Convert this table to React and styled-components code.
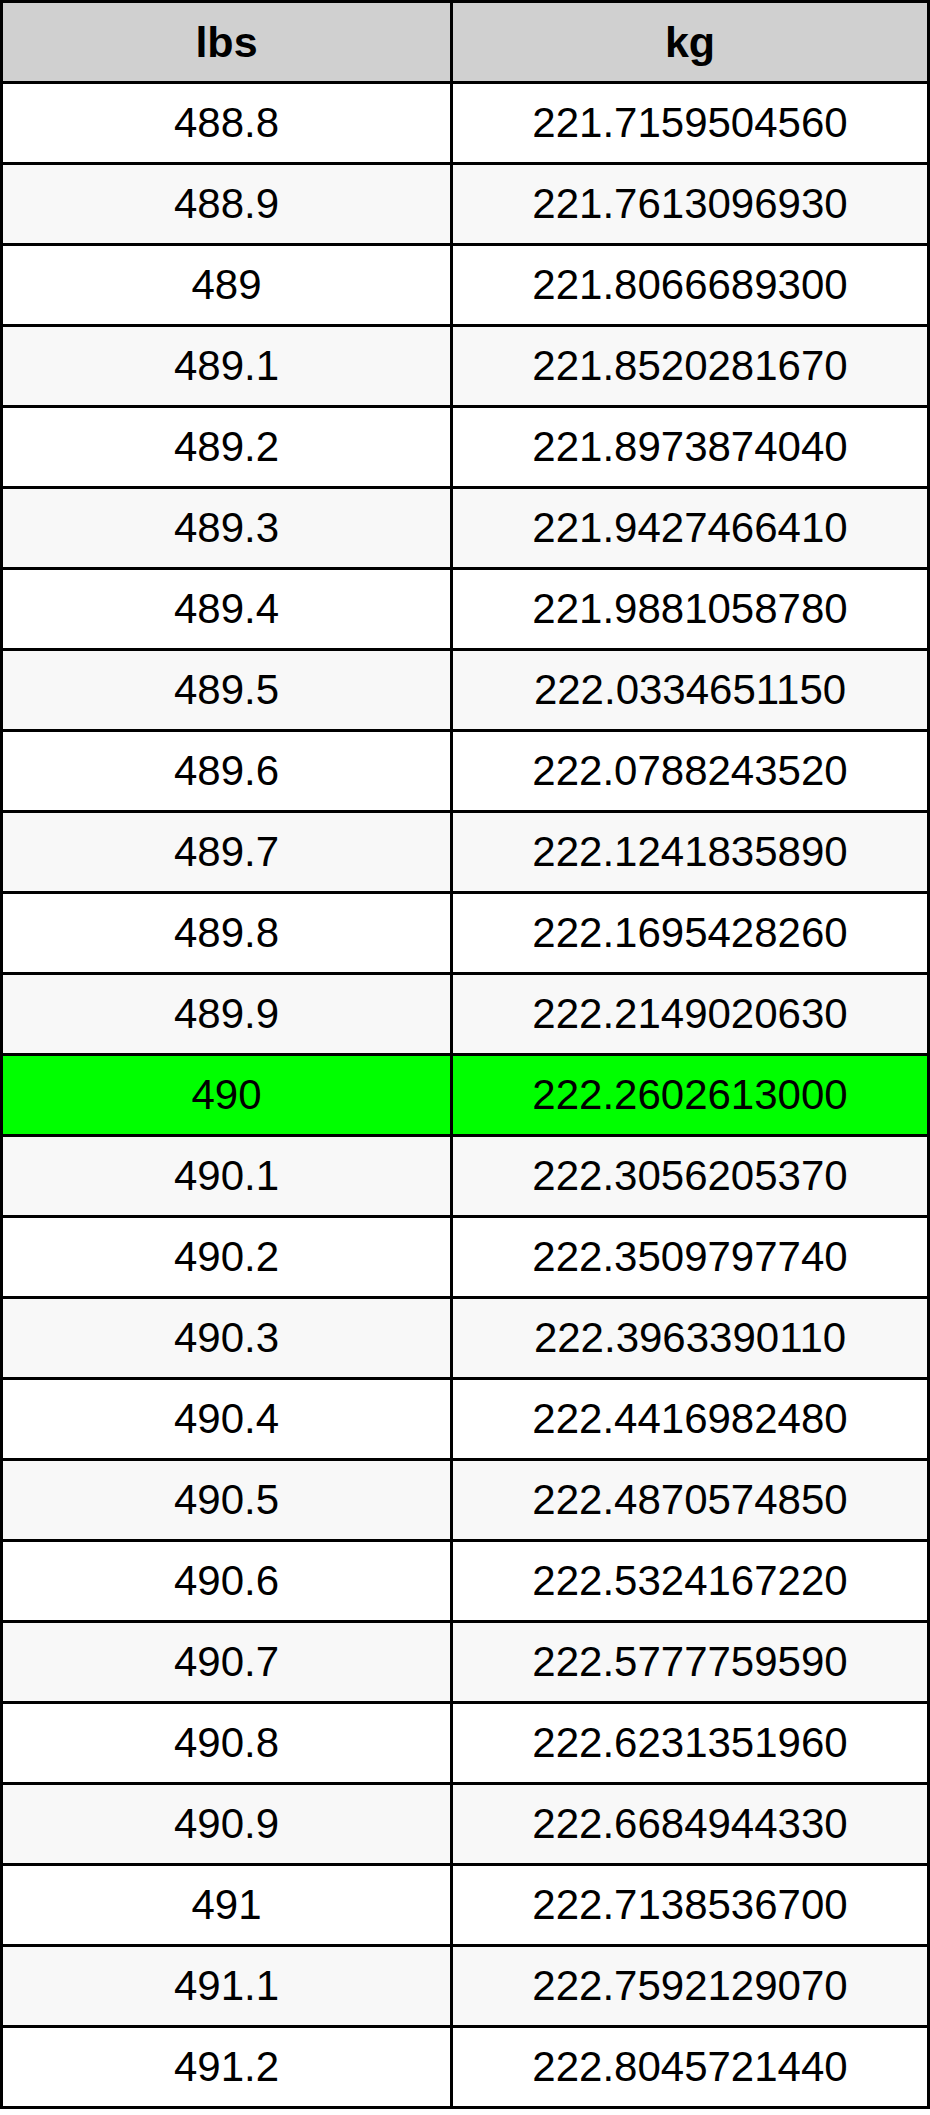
import React from "react";
import styled, { createGlobalStyle } from "styled-components";

const GlobalStyle = createGlobalStyle`
  body {
    margin: 0;
    background: #ffffff;
    font-family: "Liberation Sans", Arial, Helvetica, sans-serif;
  }
`;

const Table = styled.table`
  border-collapse: collapse;
  width: 930px;
  table-layout: fixed;
`;

const HeadCell = styled.th`
  height: 78px;
  padding: 0;
  border: 3px solid #000;
  background-color: #d0d0d0;
  font-size: 43px;
  font-weight: bold;
  text-align: center;
  color: #000;
`;

const Row = styled.tr`
  background-color: ${(p) => (p.$active ? "#00ff00" : p.$odd ? "#f8f8f8" : "#ffffff")};
`;

const Cell = styled.td`
  height: 78px;
  padding: 0;
  border: 3px solid #000;
  font-size: 42px;
  text-align: center;
  color: #000;
`;

const rows = [
  ["488.8", "221.7159504560"],
  ["488.9", "221.7613096930"],
  ["489", "221.8066689300"],
  ["489.1", "221.8520281670"],
  ["489.2", "221.8973874040"],
  ["489.3", "221.9427466410"],
  ["489.4", "221.9881058780"],
  ["489.5", "222.0334651150"],
  ["489.6", "222.0788243520"],
  ["489.7", "222.1241835890"],
  ["489.8", "222.1695428260"],
  ["489.9", "222.2149020630"],
  ["490", "222.2602613000"],
  ["490.1", "222.3056205370"],
  ["490.2", "222.3509797740"],
  ["490.3", "222.3963390110"],
  ["490.4", "222.4416982480"],
  ["490.5", "222.4870574850"],
  ["490.6", "222.5324167220"],
  ["490.7", "222.5777759590"],
  ["490.8", "222.6231351960"],
  ["490.9", "222.6684944330"],
  ["491", "222.7138536700"],
  ["491.1", "222.7592129070"],
  ["491.2", "222.8045721440"],
];

const App = () => {
  return (
    <>
      <GlobalStyle />
      <Table>
        <colgroup>
          <col style={{ width: "450px" }} />
          <col />
        </colgroup>
        <thead>
          <tr>
            <HeadCell>lbs</HeadCell>
            <HeadCell>kg</HeadCell>
          </tr>
        </thead>
        <tbody>
          {rows.map(([lbs, kg], i) => (
            <Row key={lbs} $odd={i % 2 === 1} $active={lbs === "490"}>
              <Cell>{lbs}</Cell>
              <Cell>{kg}</Cell>
            </Row>
          ))}
        </tbody>
      </Table>
    </>
  );
};

export default App;
